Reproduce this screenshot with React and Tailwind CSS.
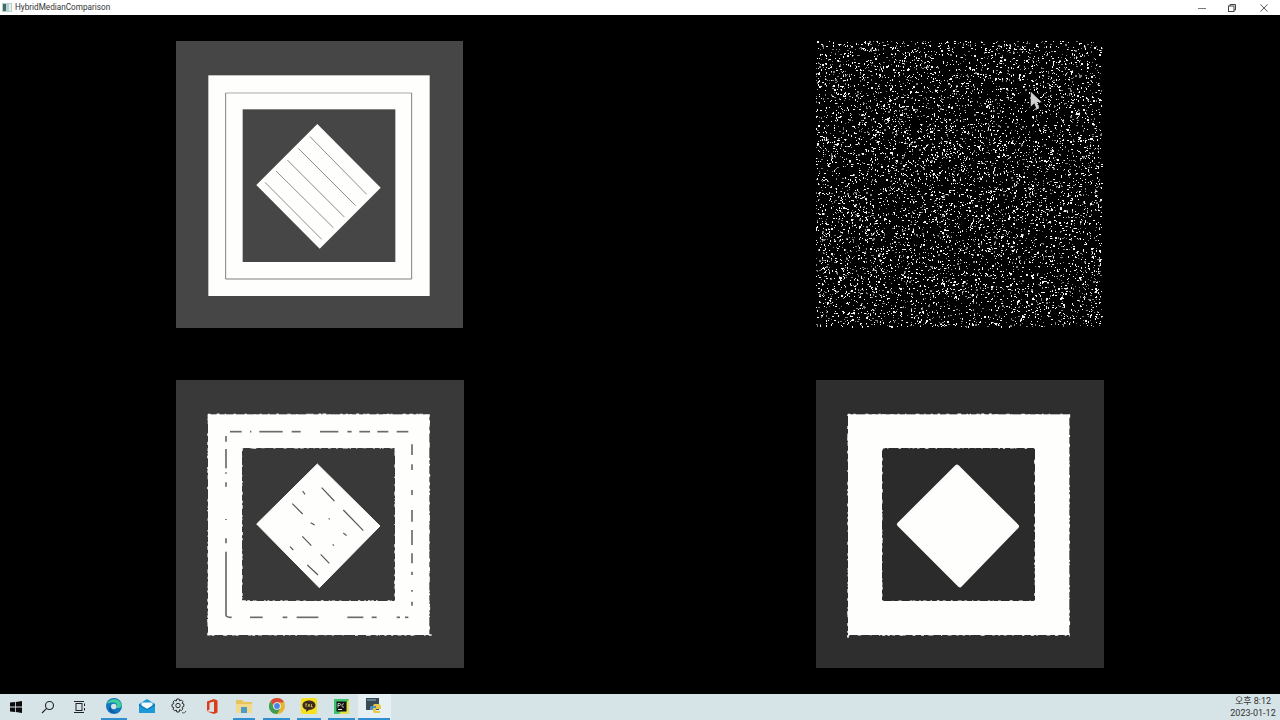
import React from 'react';

const WHITE = '#fefefc';

// small seeded random so the noise stays the same on every render
const makeRandom = (seed) => () => {
  seed = (seed + 0x6d2b79f5) | 0;
  let t = Math.imul(seed ^ (seed >>> 15), 1 | seed);
  t = (t + Math.imul(t ^ (t >>> 7), 61 | t)) ^ t;
  return ((t ^ (t >>> 14)) >>> 0) / 4294967296;
};

const buildNoise = () => {
  const rand = makeRandom(7);
  let bright = '';
  let dim = '';
  for (let i = 0; i < 7600; i++) {
    const x = Math.floor(rand() * 287);
    const y = Math.floor(rand() * 287);
    const w = rand() < 0.2 ? 2 : 1;
    const h = rand() < 0.2 ? 2 : 1;
    const d = `M${x} ${y}h${w}v${h}h-${w}z`;
    if (rand() < 0.6) bright += d;
    else dim += d;
  }
  return { bright, dim };
};

// the little nicks along the edges of the filtered squares
const buildRough = (seed, sides) => {
  const rand = makeRandom(seed);
  let d = '';
  sides.forEach(([x1, y1, x2, y2]) => {
    const horizontal = y1 === y2;
    const len = horizontal ? x2 - x1 : y2 - y1;
    for (let p = 0; p < len; p += 8 + rand() * 30) {
      const size = 3 + rand() * 9;
      const depth = 2 + rand() * 3;
      if (horizontal) d += `M${x1 + p} ${y1 - depth / 2}h${size}v${depth}h-${size}z`;
      else d += `M${x1 - depth / 2} ${y1 + p}h${depth}v${size}h-${depth}z`;
    }
  });
  return d;
};

const roughSides = [
  [114, 118, 778, 118],
  [114, 780, 778, 780],
  [114, 118, 114, 780],
  [778, 118, 778, 780],
];
const innerSides = [
  [216, 219, 675, 219],
  [216, 678, 675, 678],
  [216, 219, 216, 678],
  [675, 219, 675, 678],
];

const dashes = [
  // top
  'M180 170H215', 'M240 170H244', 'M268 170H338', 'M365 170H392', 'M450 170H505', 'M532 170H545', 'M568 170H600', 'M622 170H655', 'M680 170H715',
  // left
  'M168 183V200', 'M168 222V280', 'M168 292V296', 'M168 322V335', 'M168 432V435', 'M168 490V505', 'M168 530V720Q168 727 185 727',
  // right
  'M726 208V240', 'M726 268V285', 'M726 345V360', 'M726 405V440', 'M726 465V510', 'M726 535V565', 'M726 590V600', 'M726 645V650', 'M726 680V692',
  // bottom
  'M240 727H278', 'M338 727H352', 'M380 727H445', 'M532 727H580', 'M605 727H620', 'M680 727H690', 'M705 727H715',
];

const diamondMarks = [
  [455, 338, 493, 378], [398, 348, 405, 358], [367, 386, 398, 417], [520, 405, 580, 467],
  [422, 443, 434, 450], [476, 430, 479, 433], [397, 484, 424, 512], [520, 474, 530, 482],
  [360, 515, 370, 525], [488, 508, 492, 512], [452, 538, 478, 565], [412, 570, 444, 600],
];

const OriginalPanel = () => (
  <svg viewBox="18 18 861 861" className="w-[287px] h-[287px] block">
    <rect x="18" y="18" width="861" height="861" fill="#464646" />
    <rect x="115" y="121" width="664" height="662" fill={WHITE} />
    <path d="M167 174H725" stroke="#aaa" strokeWidth="3" fill="none" />
    <path d="M167 174V732H725V174" stroke="#666" strokeWidth="2.500" fill="none" />
    <rect x="218" y="223" width="458" height="458" fill="#464646" />
    <polygon points="442,267 632,458 449,641 259,450" fill={WHITE} />
    <g stroke="#777" strokeWidth="2.500" fill="none">
      <path d="M420 305L590 478" />
      <path d="M385 340L557 512" />
      <path d="M352 375L523 546" />
      <path d="M318 408L490 578" />
      <path d="M285 442L455 613" />
    </g>
  </svg>
);

const NoisePanel = () => {
  const noise = buildNoise();
  return (
    <svg viewBox="0 0 288 288" className="w-[287px] h-[287px] block" shapeRendering="crispEdges">
      <path d={noise.dim} fill="#808080" />
      <path d={noise.bright} fill="#f4f4f4" />
      <path d="M215.500 51v15l3.500-3.500 2.500 6 2.500-1-2.500-6h5z" fill="#d0d0d0" shapeRendering="auto" />
    </svg>
  );
};

const HybridPanel = () => (
  <svg viewBox="18 15 864 864" className="w-[288px] h-[288px] block">
    <rect x="18" y="15" width="864" height="864" fill="#393939" />
    <rect x="114" y="118" width="664" height="662" fill={WHITE} />
    <path d={buildRough(11, roughSides)} fill={WHITE} />
    <rect x="216" y="219" width="459" height="459" fill="#393939" />
    <path d={buildRough(12, innerSides)} fill={WHITE} />
    <g stroke="#6a6a6a" strokeWidth="5" fill="none">
      {dashes.map((d) => (
        <path key={d} d={d} />
      ))}
    </g>
    <polygon points="442,267 630,453 448,638 260,447" fill={WHITE} stroke={WHITE} strokeWidth="3" strokeLinejoin="round" />
    <g stroke="#555" strokeWidth="3.500" fill="none">
      {diamondMarks.map(([x1, y1, x2, y2]) => (
        <line key={`${x1}-${y1}`} x1={x1} y1={y1} x2={x2} y2={y2} />
      ))}
    </g>
  </svg>
);

const MedianPanel = () => (
  <svg viewBox="18 15 864 864" className="w-[288px] h-[288px] block">
    <rect x="18" y="15" width="864" height="864" fill="#2e2e2e" />
    <rect x="114" y="118" width="664" height="662" fill={WHITE} />
    <path d={buildRough(21, roughSides)} fill={WHITE} />
    <rect x="216" y="219" width="459" height="459" rx="5" fill="#2b2b2b" />
    <path d={buildRough(22, innerSides)} fill={WHITE} />
    <polygon points="441,276 620,454 450,630 268,448" fill={WHITE} stroke={WHITE} strokeWidth="14" strokeLinejoin="round" />
  </svg>
);

const TitleBar = () => (
  <div className="h-[15px] bg-white flex items-center shrink-0">
    <svg viewBox="0 0 10 9" className="w-[10px] h-[9px] ml-[2px] mr-[3px]">
      <rect width="10" height="9" fill="#b9d0cc" />
      <rect x="1" y="1" width="3" height="7" fill="#3d6f68" />
      <rect x="7" y="1" width="2" height="7" fill="#e8eeee" />
    </svg>
    <span className="text-[8.200px] leading-none text-[#333] font-['Roboto',sans-serif]">HybridMedianComparison</span>
    <div className="ml-auto flex items-center text-[#444]">
      <div className="w-[30px] flex justify-center">
        <svg width="8" height="8" viewBox="0 0 8 8"><path d="M0 4.500H8" stroke="#777" strokeWidth="1" /></svg>
      </div>
      <div className="w-[30px] flex justify-center">
        <svg width="8" height="8" viewBox="0 0 8 8" fill="none" stroke="#444" strokeWidth="1">
          <rect x="0.500" y="2" width="5.500" height="5.500" />
          <path d="M2 2V0.500H7.500V6H6" />
        </svg>
      </div>
      <div className="w-[33px] flex justify-center">
        <svg width="8" height="8" viewBox="0 0 8 8"><path d="M0.500 0.500L7.500 7.500M7.500 0.500L0.500 7.500" stroke="#444" strokeWidth="0.900" /></svg>
      </div>
    </div>
  </div>
);

const WinIcon = () => (
  <svg width="12" height="12" viewBox="0 0 12 12" fill="#0c0c0c">
    <path d="M0 1.600L5 1V5.600H0zM5.800 .9L12 0V5.600H5.800zM0 6.400H5V11L0 10.400zM5.800 6.400H12V12L5.800 11.100z" />
  </svg>
);

const SearchIcon = () => (
  <svg width="14" height="14" viewBox="0 0 14 14" fill="none" stroke="#222" strokeWidth="1.100">
    <circle cx="8.500" cy="5.500" r="4" />
    <path d="M5.600 8.400L1 13" />
  </svg>
);

const TaskViewIcon = () => (
  <svg width="12" height="12" viewBox="0 0 12 12" fill="none" stroke="#222" strokeWidth="1">
    <rect x="2" y="2.500" width="6" height="7" />
    <path d="M0 .5H10M0 11.500H10M10.500 2.500V5M10.500 7V9.500" />
  </svg>
);

const EdgeIcon = () => (
  <svg width="16" height="16" viewBox="0 0 16 16">
    <circle cx="8" cy="8" r="8" fill="#1478bf" />
    <path d="M1 6C3 0 13-1 15.600 6.500 16 9.500 13 10.500 10.500 10 12 8 11 4.500 7.500 4.500 4.500 4.500 2 5 1 6z" fill="#3fcf9a" />
    <path d="M5 9C5 12 8 14 11 14 8.500 16 4 15 3 12 2.500 10 4 8 5 9z" fill="#0f5aa5" />
    <circle cx="7.800" cy="8.500" r="2.800" fill="#d5e3e6" />
  </svg>
);

const MailIcon = () => (
  <svg width="16" height="14" viewBox="0 0 16 14">
    <path d="M0 5L8 0L16 5V14H0z" fill="#1b9ad6" />
    <path d="M2.500 3.500H13.500V7L8 10L2.500 7z" fill="#f4f8fa" />
    <path d="M0 5L8 10L16 5V6.500L8 11L0 6.500z" fill="#0d6fb0" />
  </svg>
);

const GearIcon = () => (
  <svg width="16" height="16" viewBox="0 0 16 16" fill="none" stroke="#2a2a2a" strokeWidth="1">
    <circle cx="7" cy="7.500" r="2.200" />
    <path d="M5.800 1H8.200L8.700 2.800 10.400 2 12 3.700 11.100 5.300 12.800 6V8.500L11.100 9.300 11.900 11 10.300 12.500 8.600 11.700 8.100 14H5.800L5.300 12 3.600 12.800 2 11.200 2.800 9.500 1 8.800V6.400L2.800 5.600 2 4 3.600 2.300 5.300 3z" />
    <path d="M11 14.500C12.500 15.500 14.500 14.800 14.800 13" stroke="#555" />
  </svg>
);

const OfficeIcon = () => (
  <svg width="12" height="15" viewBox="0 0 12 15">
    <path d="M1 2.500L8 0L11.500 1.500V13.500L8 15L1 12.500L8 13V2.500L3.500 3.700V10.500L1 12z" fill="#dc3c18" />
  </svg>
);

const FolderIcon = () => (
  <svg width="16" height="14" viewBox="0 0 16 14">
    <path d="M0 1H6L8 3H16V6H0z" fill="#e8c35a" />
    <rect y="5" width="16" height="9" fill="#f2d98c" />
    <rect x="5" y="8" width="6" height="6" fill="#4f9bc7" />
  </svg>
);

const ChromeIcon = () => (
  <svg width="16" height="16" viewBox="0 0 16 16">
    <circle cx="8" cy="8" r="8" fill="#e8b52f" />
    <path d="M8 0A8 8 0 0 1 15 4.200L8 4.500 4 7 1.700 3.200A8 8 0 0 1 8 0z" fill="#d9483b" />
    <path d="M1.700 3.200L5 9.500 7 12 5 15.500A8 8 0 0 1 1.700 3.200z" fill="#3f9d52" />
    <path d="M0 8A8 8 0 0 0 8 16L11 11 5 10z" fill="#3f9d52" />
    <circle cx="8" cy="8" r="3.800" fill="#f3f3f3" />
    <circle cx="8" cy="8" r="2.900" fill="#4a85e8" />
  </svg>
);

const KakaoIcon = () => (
  <svg width="16" height="16" viewBox="0 0 16 16">
    <rect width="16" height="16" rx="2" fill="#f7e11e" />
    <path d="M8 2.500C3.900 2.500 1.500 4.700 1.500 7.200S3.400 11.200 5.500 11.700L5 14 8 11.900C12 11.900 14.500 9.700 14.500 7.200S12 2.500 8 2.500z" fill="#3c2a22" />
    <path d="M4 6H6M5 6V9M7 9L8 6 9 9M10.500 6V9H12" stroke="#f0d840" strokeWidth="0.700" fill="none" />
  </svg>
);

const PyCharmIcon = () => (
  <svg width="15" height="15" viewBox="0 0 15 15">
    <rect width="15" height="15" fill="#3ec46d" />
    <path d="M15 0V15H5z" fill="#dfe04a" />
    <rect x="2.500" y="2.500" width="10" height="10" fill="#111" />
    <rect x="4" y="10" width="4" height="1" fill="#eee" />
    <path d="M4 8.500V4.500H5.500Q6.500 4.500 6.500 5.500T5.500 6.500H4M10 5Q9 4.500 8.500 5T8 6.500 8.500 8 10 8" stroke="#eee" strokeWidth="0.800" fill="none" />
  </svg>
);

const PythonIcon = () => (
  <svg width="16" height="16" viewBox="0 0 16 16">
    <rect width="13" height="12" fill="#3a4a55" />
    <rect x="1" y="1" width="9" height="2" fill="#65808f" />
    <path d="M9 6H13Q15 6 15 8.500V11H10V13H14V15H9Q7 15 7 13V8Q7 6 9 6z" fill="#e7c94a" />
    <path d="M5 8H10V10H7V12H4V10Q4 8 5 8z" fill="#4d8fc4" />
  </svg>
);

const apps = [
  { icon: <EdgeIcon />, line: 'w-[26px]' },
  { icon: <MailIcon />, line: 'w-0' },
  { icon: <GearIcon />, line: 'w-0' },
  { icon: <OfficeIcon />, line: 'w-0' },
  { icon: <FolderIcon />, line: 'w-[22px]' },
  { icon: <ChromeIcon />, line: 'w-[27px]' },
  { icon: <KakaoIcon />, line: 'w-[24px]' },
  { icon: <PyCharmIcon />, line: 'w-[27px]' },
  { icon: <PythonIcon />, line: 'w-[32px]', active: true },
];

const Taskbar = () => (
  <div className="h-[26px] bg-[#d6e4e7] flex shrink-0">
    {[<WinIcon key="w" />, <SearchIcon key="s" />, <TaskViewIcon key="t" />].map((icon, i) => (
      <div key={i} className="w-8 h-full flex items-center justify-center">{icon}</div>
    ))}
    <div className="ml-[2px] flex">
      {apps.map((app, i) => (
        <div key={i} className={`w-[32.500px] h-full flex flex-col items-center ${app.active ? 'bg-[#e6eff1]' : ''}`}>
          <div className="flex-1 flex items-center justify-center">{app.icon}</div>
          <div className={`h-[2px] bg-[#2f8fd0] ${app.line}`}></div>
        </div>
      ))}
    </div>
    <div className="ml-auto w-[54px] flex flex-col items-center justify-center text-[9px] leading-[12px] text-[#333] font-['Roboto','Noto_Sans_CJK_KR',sans-serif]">
      <span>오후 8:12</span>
      <span>2023-01-12</span>
    </div>
  </div>
);

export default function App() {
  return (
    <div className="w-[1280px] h-[720px] flex flex-col bg-black overflow-hidden">
      <TitleBar />
      <div className="flex-1 pl-[176px] pt-[26px] grid grid-cols-[288px_288px] grid-rows-[288px_288px] gap-x-[352px] gap-y-[51px] content-start">
        <OriginalPanel />
        <NoisePanel />
        <HybridPanel />
        <MedianPanel />
      </div>
      <Taskbar />
    </div>
  );
}
